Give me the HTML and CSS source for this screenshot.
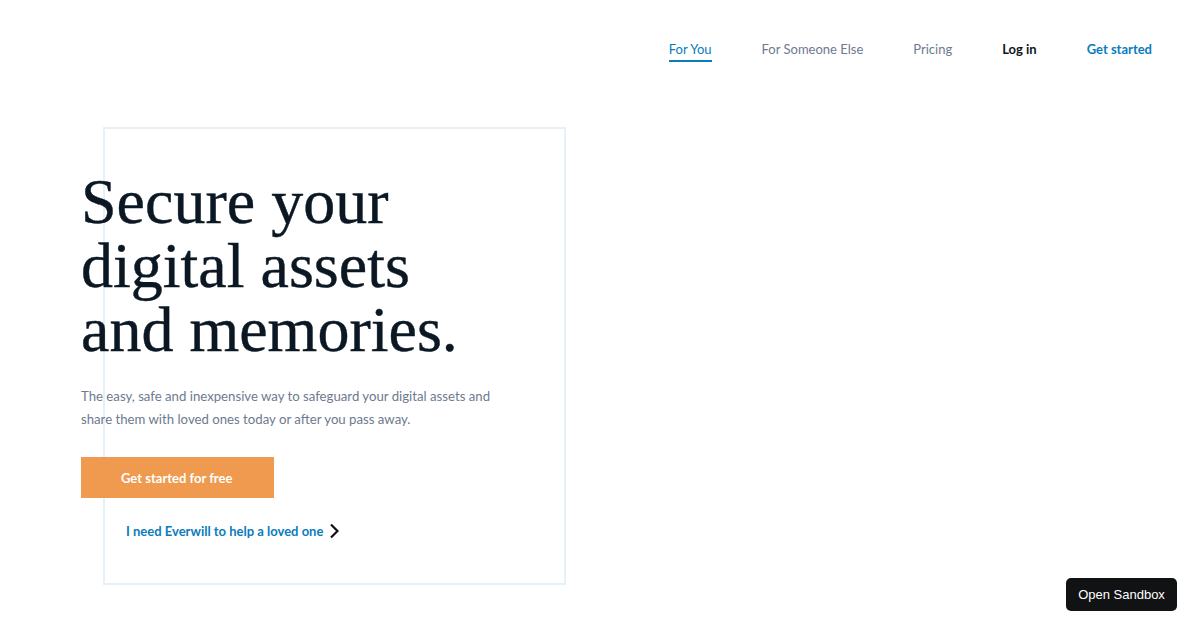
FILE: index.html
```html
<!DOCTYPE html>
<html lang="en">
<head>
<meta charset="utf-8">
<title>Everwill</title>
<link rel="stylesheet" href="styles.css">
</head>
<body>
<header class="topbar">
  <nav class="nav">
    <a class="nav-link active" href="#">For You</a>
    <a class="nav-link" href="#">For Someone Else</a>
    <a class="nav-link" href="#">Pricing</a>
    <a class="nav-link login" href="#">Log in</a>
    <a class="nav-link cta" href="#">Get started</a>
  </nav>
</header>
<main class="hero">
  <div class="frame"></div>
  <div class="hero-content">
    <h1 class="title">Secure your<br>digital assets<br>and memories.</h1>
    <p class="lead">The easy, safe and inexpensive way to safeguard your digital assets and share them with loved ones today or after you pass away.</p>
    <a class="btn" href="#">Get started for free</a>
    <a class="help-link" href="#">I need Everwill to help a loved one
      <svg class="chev" width="10" height="16" viewBox="0 0 10 16"><path d="M2 1.5 L8.5 8 L2 14.5" fill="none" stroke="#111" stroke-width="2.2"/></svg>
    </a>
  </div>
</main>
<a class="sandbox" href="#">Open Sandbox</a>
</body>
</html>
```
FILE: styles.css
```css
* { box-sizing: border-box; }
html, body { margin: 0; padding: 0; background: #fff; }
body {
  font-family: Lato, "Noto Sans", sans-serif;
  width: 1200px;
  height: 630px;
  overflow: hidden;
  position: relative;
}
a { text-decoration: none; }
.topbar {
  display: flex;
  justify-content: flex-end;
  padding: 39px 48px 0 0;
}
.nav {
  display: flex;
  gap: 50px;
  align-items: flex-start;
}
.nav-link {
  font-size: 13px;
  line-height: 20px;
  color: #6d7a8f;
  padding-bottom: 1px;
  border-bottom: 2px solid transparent;
}
.nav-link.active { color: #0a7cbc; border-bottom-color: #0a7cbc; }
.nav-link.login { color: #0c1620; font-weight: 700; }
.nav-link.cta { color: #0a7cbc; font-weight: 700; }
.hero {
  position: relative;
  padding: 108px 0 0 81px;
}
.frame {
  position: absolute;
  left: 103px;
  top: 65px;
  width: 463px;
  height: 458px;
  border: 2px solid #e6f0f7;
}
.hero-content {
  position: relative;
  display: flex;
  flex-direction: column;
  align-items: flex-start;
}
.title {
  margin: 0;
  font-family: "Liberation Serif", "DejaVu Serif", serif;
  font-weight: 400;
  font-size: 64px;
  line-height: 64px;
  color: #0b1824;
  -webkit-text-stroke: 0.4px #0b1824;
}
.lead {
  margin: 23px 0 0;
  width: 420px;
  font-size: 13.2px;
  line-height: 23px;
  color: #6d7a8f;
}
.btn {
  margin-top: 26px;
  width: 193px;
  height: 41px;
  padding-left: 40px;
  display: flex;
  align-items: center;
  background: #ef9a4f;
  color: #fff;
  font-size: 13px;
  font-weight: 700;
}
.help-link {
  margin: 25px 0 0 45px;
  display: flex;
  align-items: center;
  gap: 6px;
  font-size: 13px;
  font-weight: 700;
  color: #0a7cbc;
}
.chev { display: block; }
.sandbox {
  position: fixed;
  right: 23px;
  bottom: 19px;
  width: 111px;
  height: 33px;
  border-radius: 5px;
  background: #111214;
  color: #fff;
  font-family: "Liberation Sans", Arial, sans-serif;
  font-size: 13px;
  display: flex;
  align-items: center;
  justify-content: center;
}
```
